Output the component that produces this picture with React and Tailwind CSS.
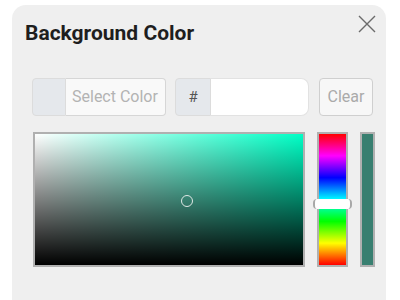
import React from 'react';

const CloseIcon = () => (
    <svg width="20" height="20" viewBox="0 0 20 20" className="text-[#6b6b6b]">
        <path d="M2 2L18 18M18 2L2 18" stroke="currentColor" strokeWidth="1.4" fill="none" />
    </svg>
);

const App = () => {
    return (
        <div className="w-[400px] h-[300px] bg-white overflow-hidden font-['Roboto',sans-serif]">
            <div className="ml-[12px] mt-[5px] w-[374px] h-[320px] rounded-[14px] bg-[#efefef] relative">
                <div className="flex items-start justify-between pl-[13px] pr-[9px] pt-[14px]">
                    <h2 className="text-[21px] font-bold text-[#1e1e1e] leading-[24px] mt-[2px]">Background Color</h2>
                    <button className="mt-[-5px]">
                        <CloseIcon />
                    </button>
                </div>

                {/* Inputs row */}
                <div className="flex items-center pl-[20px] mt-[33px] h-[38px]">
                    <div className="flex h-full">
                        <div className="w-[34px] h-full bg-[#e5e8ec] border border-[#dcdcdc] rounded-l-[4px]" />
                        <div className="w-[100px] h-full bg-[#f9f9f9] border border-l-0 border-[#d6d6d6] rounded-r-[4px] flex items-center pl-[6px] text-[16px] text-[#b3b3b3]">
                            Select Color
                        </div>
                    </div>
                    <div className="flex h-full ml-[9px]">
                        <div className="w-[36px] h-full bg-[#e5e8ec] border border-[#dcdcdc] rounded-l-[4px] flex items-center justify-center text-[15px] text-[#555]">
                            #
                        </div>
                        <div className="w-[98px] h-full bg-white border border-l-0 border-[#e2e2e2] rounded-r-[8px]" />
                    </div>
                    <button className="ml-[10px] w-[54px] h-full bg-[#f7f7f7] border border-[#cfcfcf] rounded-[4px] text-[16px] text-[#aaaaaa]">
                        Clear
                    </button>
                </div>

                {/* Picker */}
                <div className="flex pl-[21px] mt-[16px] h-[135px]">
                    <div className="relative w-[272px] h-full border-2 border-[#b0b0b0] bg-[#00ffc6]">
                        <div className="absolute inset-0 bg-gradient-to-r from-white to-transparent" />
                        <div className="absolute inset-0 bg-gradient-to-t from-black to-transparent" />
                        <div className="absolute left-[146px] top-[61px] w-[12px] h-[12px] rounded-full border-[1.5px] border-[#dfe8e5]" />
                    </div>
                    <div className="relative ml-[12px] w-[31px] h-full border-2 border-[#b0b0b0] bg-[linear-gradient(to_bottom,#ff0000,#ff00ff,#0000ff,#00ffff,#00ff00,#ffff00,#ff0000)]">
                        <div className="absolute left-[-6px] top-[65px] w-[39px] h-[10px] bg-white border-x-2 border-[#a8a8a8] rounded-[4px]" />
                    </div>
                    <div className="ml-[12px] w-[15px] h-full border-2 border-[#b0b0b0] bg-[#387f70]" />
                </div>
            </div>
        </div>
    );
};

export default App;
